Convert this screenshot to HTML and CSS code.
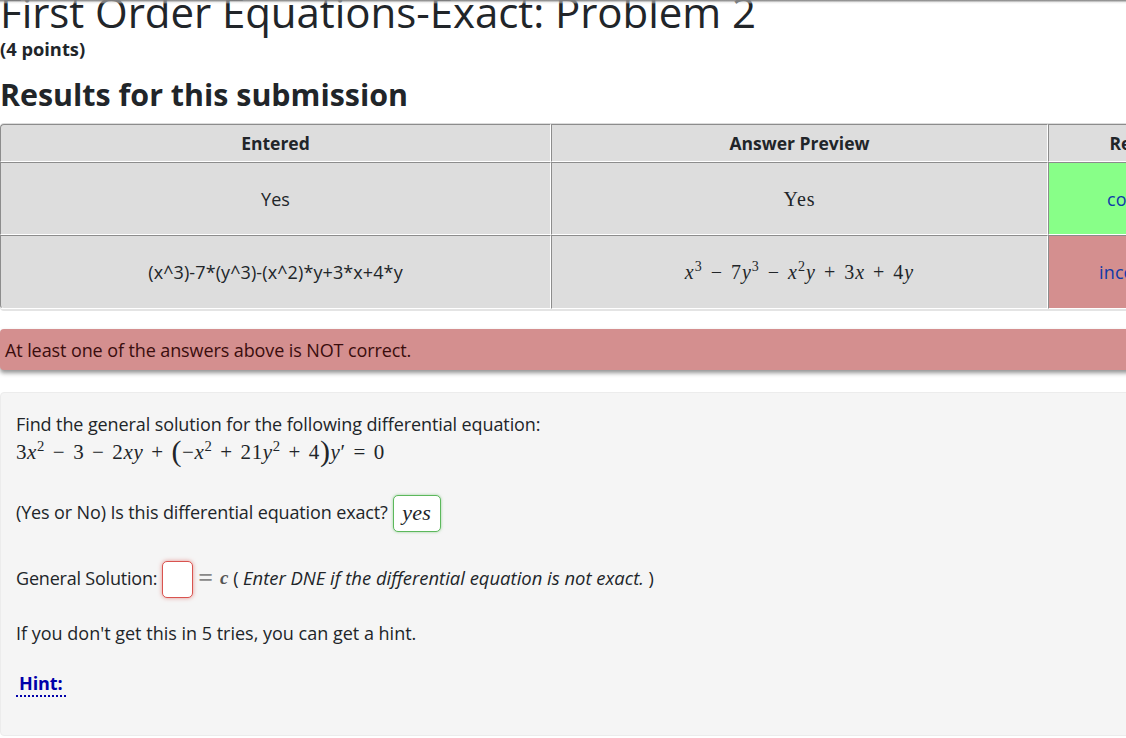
FILE: index.html
```html
<!DOCTYPE html>
<html lang="en">
<head>
<meta charset="utf-8">
<title>First Order Equations-Exact: Problem 2</title>
<link rel="stylesheet" href="styles.css">
</head>
<body>
<div class="top-shade"></div>
<main class="page">
  <h1 class="title">First Order Equations-Exact: Problem 2</h1>
  <div class="points">(4 points)</div>
  <h2 class="results-heading">Results for this submission</h2>
  <div class="table-wrap">
    <table class="results">
      <colgroup>
        <col class="col-entered"><col class="col-preview"><col class="col-result">
      </colgroup>
      <thead>
        <tr class="row-head"><th>Entered</th><th>Answer Preview</th><th>Result</th></tr>
      </thead>
      <tbody>
        <tr class="row-body">
          <td>Yes</td>
          <td><span class="math upright preview">Yes</span></td>
          <td class="ok">correct</td>
        </tr>
        <tr class="row-body row-last">
          <td>(x^3)-7*(y^3)-(x^2)*y+3*x+4*y</td>
          <td><span class="math preview"><i>x</i><sup>3</sup> − 7<i>y</i><sup>3</sup> − <i>x</i><sup>2</sup><i>y</i> + 3<i>x</i> + 4<i>y</i></span></td>
          <td class="bad">incorrect</td>
        </tr>
      </tbody>
    </table>
  </div>
  <div class="alert">At least one of the answers above is NOT correct.</div>
  <section class="problem">
    <p class="line-first">Find the general solution for the following differential equation:</p>
    <p class="line-math"><span class="math eq">3<i>x</i><sup>2</sup> − 3 − 2<i>xy</i> + <span class="big">(</span>−<i>x</i><sup>2</sup> + 21<i>y</i><sup>2</sup> + 4<span class="big">)</span><i>y</i>′ = 0</span></p>
    <p class="line-exact">(Yes or No) Is this differential equation exact? <span class="answer answer-ok"><span class="math yes"><i>yes</i></span></span></p>
    <p class="line-general">General Solution: <span class="answer answer-bad"></span> <span class="math equals">=</span> <span class="math cvar"><i>c</i></span> <span class="note">( <em>Enter DNE if the differential equation is not exact.</em> )</span></p>
    <p class="line-hint">If you don't get this in 5 tries, you can get a hint.</p>
    <p class="line-knowl"><a class="knowl" href="#">Hint:</a></p>
  </section>
</main>
</body>
</html>
```
FILE: styles.css
```css
* { box-sizing: border-box; }
html, body { margin: 0; padding: 0; height: 738px; overflow: hidden; background: #fff; }
body {
  font-family: "Open Sans", "Noto Sans", sans-serif;
  font-size: 18px;
  line-height: 24px;
  letter-spacing: -0.1px;
  color: #212529;
}
.top-shade {
  position: absolute; top: 0; left: 0; right: 0; height: 4px; z-index: 2;
  background: linear-gradient(#7d7d7d, rgba(220,220,220,.5) 60%, rgba(255,255,255,0));
}
.page { width: 1126px; overflow: hidden; }
.title {
  margin: -12px 0 0;
  font-size: 42px; line-height: 48px; font-weight: 400; white-space: nowrap; letter-spacing: -0.05px;
}
.points { font-weight: 700; font-size: 18.3px; line-height: 24px; margin-top: 1px; letter-spacing: 0; }
.results-heading { margin: 15px 0 0; font-size: 30.4px; line-height: 38px; font-weight: 700; letter-spacing: 0; }
.table-wrap { width: 1126px; margin-top: 9px; overflow: hidden; }
.results {
  width: 1226px; table-layout: fixed;
  border-collapse: separate; border-spacing: 0;
  border-top: 1px solid #dcdcdc; border-bottom: 2px solid #e4e4e4;
  text-align: center; border-radius: 4px;
}
.col-entered { width: 551px; }
.col-preview { width: 497px; }
.col-result { width: 178px; }
.results th, .results td {
  padding: 0; background: #ddd;
  border-left: 1.5px solid #8c8c8c; border-top: 1.5px solid #8c8c8c;
  border-right: 1px solid #fff; border-bottom: 1px solid #fff;
}
.results thead th:first-child { border-top-left-radius: 4px; }
.results tbody tr:last-child td:first-child { border-bottom-left-radius: 4px; }
.results th { font-weight: 700; font-size: 17.5px; letter-spacing: 0; }
.results td { font-size: 18px; letter-spacing: 0.1px; }
.row-head { height: 38px; }
.row-body { height: 73px; }
.row-last { height: 74px; }
.results td.ok { background: #8f8; color: #0f3aa8; }
.results td.bad { background: #d48f8f; color: #0f3aa8; }
.math { font-family: "Liberation Serif", "DejaVu Serif", serif; }
.math sup { font-size: 0.7em; line-height: 0; vertical-align: 0.55em; }
.preview { font-size: 20px; letter-spacing: 1px; word-spacing: 2px; }
.alert {
  margin-top: 18px; width: 1140px; height: 41px; padding: 9px 5px; line-height: 24px;
  background: #d48f8f; color: #3a0d0d; border-radius: 4px;
  box-shadow: 0 3px 4px rgba(60,60,60,.55);
}
.problem {
  margin-top: 22px; width: 1140px; height: 344px; padding: 19px 15px 0;
  background: #f5f5f5; border: 1px solid #ececec; border-radius: 4px;
}
.problem p { margin: 0; white-space: nowrap; }
.eq { font-size: 21px; letter-spacing: 0.6px; word-spacing: 2px; }
.big { font-size: 30px; line-height: 0; font-weight: 400; vertical-align: -2px; }
.line-math { margin-top: 4px !important; height: 24px; }
.line-exact { margin-top: 29px !important; height: 38px; display: flex; align-items: center; gap: 5px; letter-spacing: -0.13px; }
.line-general { margin-top: 28px !important; height: 38px; display: flex; align-items: center; gap: 5px; letter-spacing: -0.2px; }
.line-hint { margin-top: 24px !important; letter-spacing: 0; }
.line-knowl { margin-top: 26px !important; }
.answer {
  display: inline-flex; align-items: center; justify-content: center;
  height: 37px; margin-top: 2px; background: #fff; border-radius: 5px;
}
.answer-ok { width: 48px; border: 1px solid #5cb85c; box-shadow: 0 0 3px rgba(92,184,92,.6); }
.answer-bad { width: 31px; border: 1px solid #d9534f; box-shadow: 0 0 4px rgba(217,83,79,.6); }
.yes { font-size: 22px; letter-spacing: 0.3px; }
.equals { color: #888; font-size: 26px; font-weight: 700; }
.cvar { font-size: 19px; font-weight: 700; color: #555; margin-left: 2px; }
.note { letter-spacing: -0.1px; }
.note em { font-size: 18.45px; letter-spacing: 0; }
.knowl {
  display: inline-block; padding: 0 3px; margin-left: 0;
  color: #00a; font-weight: 700; text-decoration: none;
  border-bottom: 2px dotted #00a; line-height: 24px;
}
```
